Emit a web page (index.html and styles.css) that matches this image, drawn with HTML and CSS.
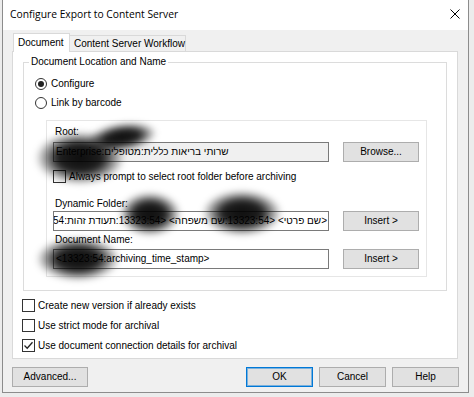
FILE: index.html
```html
<!DOCTYPE html>
<html lang="en">
<head>
<meta charset="utf-8">
<title>Configure Export to Content Server</title>
<link rel="stylesheet" href="styles.css">
</head>
<body>
<div class="win">
  <div class="titlebar">
    <span class="title">Configure Export to Content Server</span>
    <svg class="close" width="10" height="10" viewBox="0 0 10 10"><path d="M0.5 0.5L9.5 9.5M9.5 0.5L0.5 9.5" stroke="#000" stroke-width="1" fill="none"/></svg>
  </div>
  <div class="client">
    <div class="tabs">
      <div class="tab active">Document</div>
      <div class="tab">Content Server Workflow</div>
    </div>
    <div class="panel">
      <fieldset class="group">
        <legend>Document Location and Name</legend>
        <div class="radio"><span class="rb checked"></span><span>Configure</span></div>
        <div class="radio"><span class="rb"></span><span>Link by barcode</span></div>
        <div class="inner">
          <div class="lbl">Root:</div>
          <div class="row">
            <div class="tb ro"><span dir="ltr">Enterprise:שרותי בריאות כללית:מטופלים</span></div>
            <div class="btn side">Browse...</div>
          </div>
          <div class="check first"><span class="cb"></span><span>Always prompt to select root folder before archiving</span></div>
          <div class="lbl gap15">Dynamic Folder:</div>
          <div class="row r2">
            <div class="tb end"><span dir="ltr">&lt;13323:54:שם פרטי&gt; &lt;13323:54:שם משפחה&gt; &lt;13323:54:תעודת זהות&gt;</span></div>
            <div class="btn side">Insert &gt;</div>
          </div>
          <div class="lbl gap3">Document Name:</div>
          <div class="row r3">
            <div class="tb"><span dir="ltr">&lt;13323:54:archiving_time_stamp&gt;</span></div>
            <div class="btn side">Insert &gt;</div>
          </div>
        </div>
      </fieldset>
      <div class="checks">
        <div class="check"><span class="cb"></span><span>Create new version if already exists</span></div>
        <div class="check"><span class="cb"></span><span>Use strict mode for archival</span></div>
        <div class="check"><span class="cb on"><svg width="11" height="11" viewBox="0 0 11 11"><path d="M1.5 5.5L4.2 8.2L9.5 2.2" stroke="#222" stroke-width="1.3" fill="none"/></svg></span><span>Use document connection details for archival</span></div>
      </div>
    </div>
    <div class="buttons">
      <div class="btn adv">Advanced...</div>
      <div class="spacer"></div>
      <div class="btn def">OK</div>
      <div class="btn">Cancel</div>
      <div class="btn">Help</div>
    </div>
  </div>
  <div class="blob a1"></div>
  <div class="blob a2"></div>
  <div class="blob b"></div>
  <div class="blob c"></div>
  <div class="blob d"></div>
</div>
</body>
</html>
```

FILE: styles.css
```css
* { box-sizing: border-box; }
html, body { margin: 0; padding: 0; }
body {
  width: 474px;
  height: 397px;
  overflow: hidden;
  background: #ececec;
  font-family: "Liberation Sans", Arial, "Noto Sans", sans-serif;
  font-size: 10px;
  line-height: 12px;
  color: #000;
}
.win {
  position: relative;
  margin-left: 2px;
  width: 467px;
  height: 393px;
  border: 1px solid #8c8c8c;
  border-top: none;
  background: #f0f0f0;
  display: flex;
  flex-direction: column;
}
.titlebar {
  height: 30px;
  flex: none;
  background: #fff;
  display: flex;
  align-items: flex-start;
  justify-content: space-between;
  padding: 0 8px 0 7px;
}
.title {
  font-family: "Open Sans", "Liberation Sans", sans-serif;
  font-size: 10.3px;
  line-height: 14px;
  margin-top: 7px;
}
.close { margin-top: 9px; }
.client {
  flex: 1;
  display: flex;
  flex-direction: column;
  padding: 3px 9px 5px 9px;
}
.tabs {
  display: flex;
  align-items: flex-start;
  height: 18px;
  margin-left: 1px;
}
.tab {
  border: 1px solid #d9d9d9;
  border-bottom: none;
  padding: 0 0 0 4px;
  white-space: nowrap;
}
.tab.active {
  position: relative;
  z-index: 1;
  width: 57px;
  height: 19px;
  background: #fff;
  line-height: 17px;
}
.tab:not(.active) {
  width: 117px;
  height: 16px;
  margin-top: 2px;
  margin-left: -1px;
  background: #f0f0f0;
  line-height: 15px;
}
.panel {
  margin-right: 1px;
  border: 1px solid #d9d9d9;
  background: #fff;
  padding: 4px 10px 6px 9px;
}
.group {
  margin: 0 0 0 1px;
  border: 1px solid #dcdcdc;
  padding: 6px 19px 13px 11px;
  min-width: 0;
}
.group legend {
  padding: 0 2px;
  margin-left: -6px;
  line-height: 12px;
}
.radio {
  display: flex;
  align-items: center;
  height: 19px;
  gap: 4px;
}
.rb {
  width: 12px;
  height: 12px;
  border: 1px solid #333;
  border-radius: 50%;
  background: #fff;
  display: flex;
  align-items: center;
  justify-content: center;
}
.rb.checked::after {
  content: "";
  width: 6px;
  height: 6px;
  border-radius: 50%;
  background: #222;
}
.inner {
  margin: 8px 0 0 11px;
  border: 1px solid #e6e6e6;
  padding: 5px 7px 7px 6px;
}
.lbl { margin-left: 2px; height: 12px; }
.gap15 { margin-top: 15px; }
.gap3 { margin-top: 3px; }
.row {
  display: flex;
  margin-top: 4px;
  height: 20px;
}
.row.r2 { margin-top: 1px; }
.row.r3 { margin-top: 3px; }
.tb {
  width: 276px;
  height: 20px;
  border: 1px solid #7a7a7a;
  background: #fff;
  padding: 0 2px;
  display: flex;
  align-items: center;
  overflow: hidden;
  white-space: nowrap;
}
.tb.ro { background: #f0f0f0; }
.tb.end { justify-content: flex-end; padding-right: 1px; }
.tb span { flex: none; }
.btn {
  height: 20px;
  width: 67px;
  border: 1px solid #adadad;
  background: #e1e1e1;
  display: flex;
  align-items: center;
  justify-content: center;
  white-space: nowrap;
}
.btn.side { width: 76px; margin-left: 14px; }
.check {
  display: flex;
  align-items: center;
  gap: 3px;
  height: 13px;
}
.check.first { margin-top: 8px; }
.cb {
  width: 13px;
  height: 13px;
  flex: none;
  border: 1px solid #333;
  background: #fff;
  display: flex;
  align-items: center;
  justify-content: center;
}
.checks {
  margin-top: 8px;
  display: flex;
  flex-direction: column;
  gap: 7px;
}
.buttons {
  display: flex;
  gap: 6px;
  margin-top: 8px;
}
.btn.adv { width: 76px; }
.spacer { flex: 1; }
.btn.def {
  border-color: #0078d7;
  box-shadow: inset 0 0 0 1px rgba(0, 120, 215, 0.45);
}
.blob {
  position: absolute;
  border-radius: 50%;
  background: radial-gradient(closest-side, rgba(0,0,0,0.95) 0%, rgba(0,0,0,0.88) 50%, rgba(0,0,0,0) 100%);
  filter: blur(3px);
  pointer-events: none;
}
.blob.a1 { left: 32px; top: 131px; width: 90px; height: 54px; }
.blob.a2 { left: 84px; top: 123px; width: 70px; height: 28px; transform: rotate(-8deg); }
.blob.b { left: 116px; top: 192px; width: 62px; height: 44px; }
.blob.c { left: 199px; top: 190px; width: 80px; height: 46px; }
.blob.d { left: 33px; top: 237px; width: 84px; height: 44px; }
```
